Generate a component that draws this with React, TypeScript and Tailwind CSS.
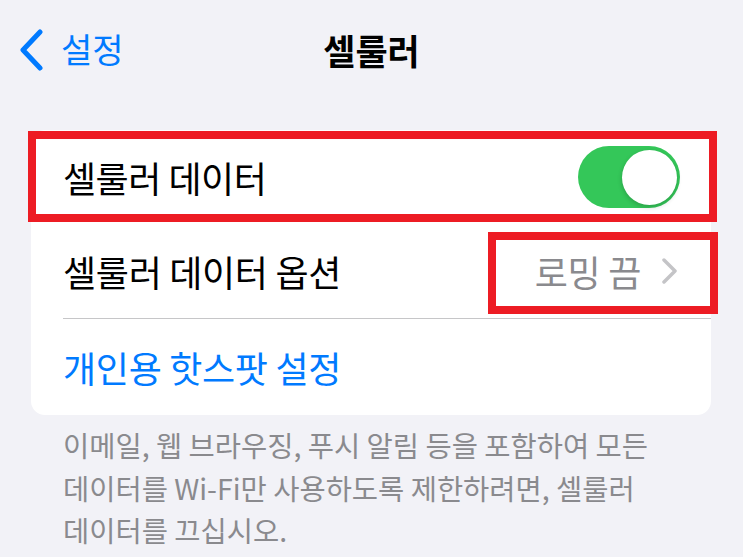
import React from "react";

const font = { fontFamily: '"Noto Sans CJK KR", "Noto Sans", sans-serif' };

export default function App() {
  return (
    <div
      className="w-[743px] h-[557px] bg-[#f2f2f7] overflow-hidden relative"
      style={font}
    >
      {/* Header */}
      <div className="relative h-[100px] flex items-center">
        <div className="flex items-center pl-[18px] gap-[17px] text-[#007aff]">
          <svg width="26" height="42" viewBox="0 0 26 42" fill="none">
            <path
              d="M22 3 L5 21 L22 39"
              stroke="#007aff"
              strokeWidth="5"
              strokeLinecap="round"
              strokeLinejoin="round"
            />
          </svg>
          <span className="text-[34px] leading-none -mt-[2px]">설정</span>
        </div>
        <div className="absolute inset-x-0 top-0 h-[100px] flex items-center justify-center pointer-events-none">
          <span className="text-[35px] font-semibold text-black leading-none -mt-[2px]">
            셀룰러
          </span>
        </div>
      </div>

      {/* Card */}
      <div className="mt-[30px] ml-[31px] w-[680px] bg-white rounded-[14px] overflow-hidden">
        <div className="h-[94px] flex items-center justify-between pl-[32px] pr-[31px]">
          <span className="text-[36px] tracking-[-0.5px] text-black leading-none">셀룰러 데이터</span>
          <div className="w-[102px] h-[62px] rounded-full bg-[#34c759] flex items-center justify-end pr-[3px]">
            <div className="w-[55px] h-[55px] rounded-full bg-white shadow-[0_2px_5px_rgba(0,0,0,0.2)]" />
          </div>
        </div>
        <div className="ml-[32px] h-[95px] flex items-center justify-between pr-[34px] border-b border-[#c6c6c8]">
          <span className="text-[36px] tracking-[-0.3px] text-black leading-none">셀룰러 데이터 옵션</span>
          <div className="flex items-center gap-[21px]">
            <span className="text-[36px] tracking-[-0.3px] text-[#8a8a8e] leading-none">로밍 끔</span>
            <svg width="15" height="26" viewBox="0 0 15 26" fill="none">
              <path
                d="M2 2 L13 13 L2 24"
                stroke="#c4c4c7"
                strokeWidth="3.5"
                strokeLinecap="round"
                strokeLinejoin="round"
              />
            </svg>
          </div>
        </div>
        <div className="h-[96px] flex items-center pl-[32px]">
          <span className="text-[36px] tracking-[-0.3px] text-[#007aff] leading-none">개인용 핫스팟 설정</span>
        </div>
      </div>

      {/* Footer */}
      <div className="mt-[9px] pl-[63px] pr-[30px] text-[28.5px] leading-[42.5px] text-[#8a8a8e] whitespace-nowrap">
        <div>이메일, 웹 브라우징, 푸시 알림 등을 포함하여 모든</div>
        <div>데이터를 Wi-Fi만 사용하도록 제한하려면, 셀룰러</div>
        <div>데이터를 끄십시오.</div>
      </div>

      {/* Red highlight boxes */}
      <div className="absolute left-[28px] top-[131px] w-[689px] h-[91px] border-[8px] border-[#ed1c24] pointer-events-none" />
      <div className="absolute left-[488px] top-[232px] w-[230px] h-[82px] border-[8px] border-[#ed1c24] pointer-events-none" />
    </div>
  );
}
